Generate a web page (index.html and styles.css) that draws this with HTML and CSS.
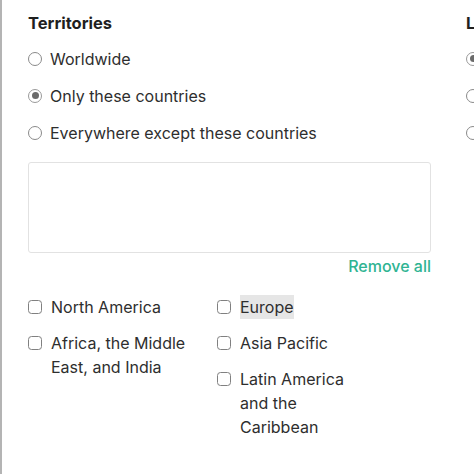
FILE: index.html
```html
<!DOCTYPE html>
<html>
<head>
<meta charset="utf-8">
<link rel="stylesheet" href="styles.css">
</head>
<body>
<div class="page">
  <section class="territories">
    <h2 class="title">Territories</h2>
    <div class="radios">
      <label class="radio-row"><span class="radio"></span><span>Worldwide</span></label>
      <label class="radio-row"><span class="radio checked"></span><span>Only these countries</span></label>
      <label class="radio-row"><span class="radio"></span><span>Everywhere except these countries</span></label>
    </div>
    <div class="box"></div>
    <div class="remove-row"><a class="remove">Remove all</a></div>
    <div class="regions">
      <div class="col col1">
        <label class="check-row"><span class="checkbox"></span><span class="label">North America</span></label>
        <label class="check-row"><span class="checkbox"></span><span class="label">Africa, the Middle East, and India</span></label>
      </div>
      <div class="col col2">
        <label class="check-row"><span class="checkbox"></span><span class="label hl">Europe</span></label>
        <label class="check-row"><span class="checkbox"></span><span class="label">Asia Pacific</span></label>
        <label class="check-row"><span class="checkbox"></span><span class="label">Latin America and the Caribbean</span></label>
      </div>
    </div>
  </section>
  <section class="languages">
    <h2 class="title">L</h2>
    <div class="radios">
      <label class="radio-row"><span class="radio checked"></span></label>
      <label class="radio-row"><span class="radio"></span></label>
      <label class="radio-row"><span class="radio"></span></label>
    </div>
  </section>
</div>
</body>
</html>
```
FILE: styles.css
```css
html, body {
  margin: 0;
  padding: 0;
  background: #fff;
}
body {
  width: 474px;
  height: 474px;
  overflow: hidden;
  font-family: Inter, "Noto Sans", sans-serif;
  color: #2e2e2e;
  font-size: 16px;
}
.page {
  display: flex;
  gap: 35px;
  height: 474px;
  border-left: 2px solid #b4b4b4;
  padding-left: 26px;
  padding-top: 12px;
  box-sizing: border-box;
  overflow: hidden;
}
.territories {
  width: 403px;
  flex: none;
}
.languages {
  flex: none;
  width: 8px;
}
.title {
  margin: 0;
  font-size: 16.5px;
  font-weight: 700;
  line-height: 22px;
  color: #1f1f1f;
}
.radios {
  display: flex;
  flex-direction: column;
  margin-top: 6px;
}
.radio-row {
  display: flex;
  align-items: center;
  gap: 8px;
  height: 37px;
  line-height: 24px;
}
.radio {
  width: 14px;
  height: 14px;
  box-sizing: border-box;
  border: 1px solid #8a8a8a;
  border-radius: 50%;
  display: flex;
  align-items: center;
  justify-content: center;
  flex: none;
}
.radio.checked {
  border: 1.5px solid #9a9a9a;
}
.radio.checked::after {
  content: "";
  width: 7px;
  height: 7px;
  border-radius: 50%;
  background: #6a6a6a;
}
.box {
  margin-top: 11px;
  height: 91px;
  border: 1.5px solid #e2e2e2;
  border-radius: 3px;
  box-sizing: border-box;
}
.remove-row {
  display: flex;
  justify-content: flex-end;
  margin-top: 2px;
}
.remove {
  color: #2fb493;
  font-size: 16px;
  font-weight: 500;
  line-height: 22px;
}
.regions {
  display: grid;
  grid-template-columns: 189px 150px;
  margin-top: 18px;
}
.col {
  display: flex;
  flex-direction: column;
  gap: 12px;
}
.check-row {
  display: flex;
  align-items: flex-start;
  gap: 9px;
  line-height: 24px;
  font-size: 16px;
}
.checkbox {
  width: 14px;
  height: 14px;
  margin-top: 5px;
  box-sizing: border-box;
  border: 1.5px solid #808080;
  border-radius: 3.5px;
  flex: none;
  background: #fff;
}
.hl {
  background: #e6e6e6;
}
```
